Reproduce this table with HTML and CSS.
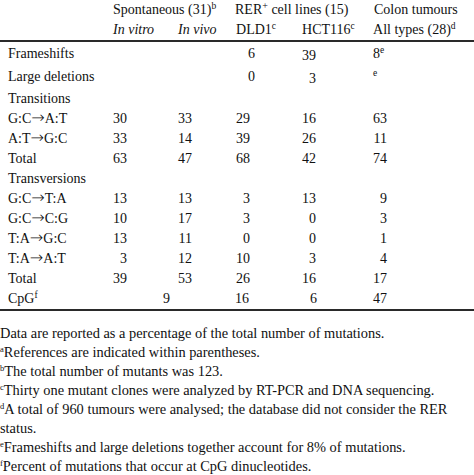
FILE: index.html
```html
<!DOCTYPE html>
<html>
<head>
<meta charset="utf-8">
<link rel="stylesheet" href="styles.css">
</head>
<body>
<table class="tbl">
  <colgroup>
    <col class="c1"><col class="c2"><col class="c3"><col class="c4"><col class="c5"><col class="c6">
  </colgroup>
  <thead>
    <tr class="h1">
      <th></th>
      <th colspan="2">Spontaneous (31)<sup>b</sup></th>
      <th colspan="2">RER<sup class="plus">+</sup> cell lines (15)</th>
      <th>Colon tumours</th>
    </tr>
    <tr class="h2">
      <th></th>
      <th><i>In vitro</i></th>
      <th><i>In vivo</i></th>
      <th>DLD1<sup>c</sup></th>
      <th>HCT116<sup>c</sup></th>
      <th>All types (28)<sup>d</sup></th>
    </tr>
  </thead>
  <tbody>
    <tr class="big"><td>Frameshifts</td><td></td><td></td><td><span class="n off">6</span></td><td><span class="n low">39</span></td><td>8<sup>e</sup></td></tr>
    <tr class="big"><td>Large deletions</td><td></td><td></td><td><span class="n off">0</span></td><td><span class="n low">3</span></td><td><sup>e</sup></td></tr>
    <tr class="mid"><td>Transitions</td><td></td><td></td><td></td><td></td><td></td></tr>
    <tr><td>G:C<span class="arr">→</span>A:T</td><td><span class="n">30</span></td><td><span class="n">33</span></td><td><span class="n">29</span></td><td><span class="n">16</span></td><td><span class="n">63</span></td></tr>
    <tr><td>A:T<span class="arr">→</span>G:C</td><td><span class="n">33</span></td><td><span class="n">14</span></td><td><span class="n">39</span></td><td><span class="n">26</span></td><td><span class="n">11</span></td></tr>
    <tr><td>Total</td><td><span class="n">63</span></td><td><span class="n">47</span></td><td><span class="n">68</span></td><td><span class="n">42</span></td><td><span class="n">74</span></td></tr>
    <tr><td>Transversions</td><td></td><td></td><td></td><td></td><td></td></tr>
    <tr><td>G:C<span class="arr">→</span>T:A</td><td><span class="n">13</span></td><td><span class="n">13</span></td><td><span class="n">3</span></td><td><span class="n">13</span></td><td><span class="n">9</span></td></tr>
    <tr><td>G:C<span class="arr">→</span>C:G</td><td><span class="n">10</span></td><td><span class="n">17</span></td><td><span class="n">3</span></td><td><span class="n">0</span></td><td><span class="n">3</span></td></tr>
    <tr><td>T:A<span class="arr">→</span>G:C</td><td><span class="n">13</span></td><td><span class="n">11</span></td><td><span class="n">0</span></td><td><span class="n">0</span></td><td><span class="n">1</span></td></tr>
    <tr><td>T:A<span class="arr">→</span>A:T</td><td><span class="n">3</span></td><td><span class="n">12</span></td><td><span class="n">10</span></td><td><span class="n">3</span></td><td><span class="n">4</span></td></tr>
    <tr><td>Total</td><td><span class="n">39</span></td><td><span class="n">53</span></td><td><span class="n">26</span></td><td><span class="n">16</span></td><td><span class="n">17</span></td></tr>
    <tr class="last"><td>CpG<sup>f</sup></td><td colspan="2" class="span9">9</td><td><span class="n">16</span></td><td><span class="n">6</span></td><td><span class="n">47</span></td></tr>
  </tbody>
</table>
<div class="notes">
  <p>Data are reported as a percentage of the total number of mutations.</p>
  <p><sup>a</sup>References are indicated within parentheses.</p>
  <p><sup>b</sup>The total number of mutants was 123.</p>
  <p><sup>c</sup>Thirty one mutant clones were analyzed by RT-PCR and DNA sequencing.</p>
  <p><sup>d</sup>A total of 960 tumours were analysed; the database did not consider the RER status.</p>
  <p><sup>e</sup>Frameshifts and large deletions together account for 8% of mutations.</p>
  <p><sup>f</sup>Percent of mutations that occur at CpG dinucleotides.</p>
</div>
</body>
</html>
```

FILE: styles.css
```css
html, body {
  margin: 0;
  padding: 0;
  background: #fff;
}
body {
  font-family: "Liberation Serif", "Times New Roman", serif;
  font-size: 14px;
  color: #111;
  width: 474px;
  overflow: hidden;
}
.tbl {
  width: 474px;
  table-layout: fixed;
  border-collapse: collapse;
  border-spacing: 0;
}
.c1 { width: 113px; }
.c2 { width: 65px; }
.c3 { width: 57px; }
.c4 { width: 67px; }
.c5 { width: 71px; }
.c6 { width: 101px; }
.tbl th, .tbl td {
  padding: 0;
  text-align: left;
  font-weight: normal;
  white-space: nowrap;
  vertical-align: middle;
  line-height: 16px;
}
.tbl td:first-child { padding-left: 8px; }
.h1 th { height: 19px; }
.h2 th { height: 21px; }
thead tr.h2 th { border-bottom: 2px solid #2a2a2a; }
.tbl tbody tr td { height: 20px; }
.tbl tbody tr.big td { height: 23px; }
.tbl tbody tr.mid td { height: 21px; }
.tbl tbody tr.last td { border-bottom: 2px solid #2a2a2a; }
.tbl th:nth-child(4), .tbl td:nth-child(4) { padding-left: 1px; }
.arr {
  font-family: "Noto Sans", "DejaVu Sans", sans-serif;
  font-weight: 300;
  font-size: 16px;
  line-height: 0;
  vertical-align: 0;
}
sup {
  font-size: 9.5px;
  line-height: 0;
  vertical-align: 5px;
}
sup.plus { font-size: 10px; }
.n {
  display: inline-block;
  width: 14px;
  text-align: right;
}
.n.off { width: auto; padding-left: 12px; }
.n.low { vertical-align: -5px; }
.span9 { padding-left: 50px !important; }
.notes {
  margin-top: 13px;
}
.notes p {
  margin: 0;
  line-height: 19px;
  font-size: 14.4px;
}
.notes sup {
  font-size: 8.5px;
  line-height: 12px;
  vertical-align: top;
}
```
